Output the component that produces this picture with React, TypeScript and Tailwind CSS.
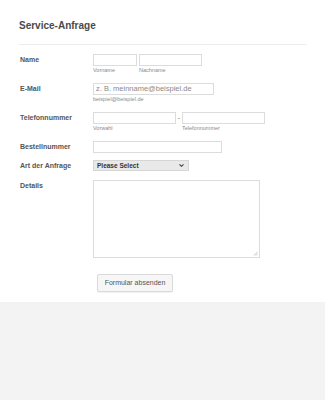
import { ChevronDown } from 'lucide-react';

const font = { fontFamily: '"Liberation Sans", Arial, sans-serif' };

function Row({ label, children, className = '' }: { label: string; children: React.ReactNode; className?: string }) {
  return (
    <div className={`flex items-start ${className}`}>
      <div className="w-[73px] shrink-0 text-[7px] leading-[12px] font-bold text-[#555]">{label}</div>
      <div className="flex-1">{children}</div>
    </div>
  );
}

function Sub({ children, className = '' }: { children: React.ReactNode; className?: string }) {
  return <div className={`mt-[1px] text-[5.5px] leading-[7px] text-[#8a8a8a] ${className}`}>{children}</div>;
}

const inputCls = 'block h-[12px] border border-[#dcdcdc] bg-white';

export default function App() {
  return (
    <div className="min-h-screen bg-[#f3f3f3]" style={font}>
      <div className="bg-white pl-[20px] pr-[19px] pt-[20px] pb-[10px]">
        <h1 className="text-[10px] leading-[12px] font-bold text-[#4a4a4a] -ml-px">Service-Anfrage</h1>
        <div className="mt-[12px] -ml-px border-b border-[#ececec]" />

        {/* Name */}
        <Row label="Name" className="mt-[9px]">
          <div className="flex gap-[2px]">
            <div>
              <div className={`${inputCls} w-[44px]`} />
              <Sub>Vorname</Sub>
            </div>
            <div>
              <div className={`${inputCls} w-[63px]`} />
              <Sub>Nachname</Sub>
            </div>
          </div>
        </Row>

        {/* E-Mail */}
        <Row label="E-Mail" className="mt-[9px]">
          <div className={`${inputCls} w-[121px] flex items-center pl-[2px] text-[7.5px] text-[#8a8a8a]`}>
            z. B. meinname@beispiel.de
          </div>
          <Sub>beispiel@beispiel.de</Sub>
        </Row>

        {/* Telefonnummer */}
        <Row label="Telefonnummer" className="mt-[9px]">
          <div className="flex items-start">
            <div>
              <div className={`${inputCls} w-[83px]`} />
              <Sub>Vorwahl</Sub>
            </div>
            <div className="w-[6px] text-center text-[7px] leading-[12px] text-[#777]">-</div>
            <div>
              <div className={`${inputCls} w-[83px]`} />
              <Sub>Telefonnummer</Sub>
            </div>
          </div>
        </Row>

        {/* Bestellnummer */}
        <Row label="Bestellnummer" className="mt-[9px]">
          <div className={`${inputCls} w-[129px]`} />
        </Row>

        {/* Art der Anfrage */}
        <Row label="Art der Anfrage" className="mt-[7px]">
          <div className="flex h-[11px] w-[96px] items-center justify-between border border-[#d6d6d6] bg-[#e9e9e9] pl-[3px] pr-[3px] text-[6.5px] font-bold text-[#333]">
            <span>Please Select</span>
            <ChevronDown className="h-[7px] w-[7px] text-[#444]" strokeWidth={3.5} />
          </div>
        </Row>

        {/* Details */}
        <Row label="Details" className="mt-[8px]">
          <div className="relative h-[78px] w-[167px] border border-[#dcdcdc] bg-white">
            <svg className="absolute bottom-[1px] right-[1px]" width="5" height="5" viewBox="0 0 5 5">
              <path d="M4.5 1 L1 4.5 M4.5 3 L3 4.5" stroke="#aaa" strokeWidth="0.7" />
            </svg>
          </div>
        </Row>

        <div className="mt-[16px] flex pl-[77px]">
          <button className="h-[18px] w-[76px] rounded-[2px] border border-[#dadada] bg-[#f6f6f6] text-[7px] text-[#555] shadow-[0_1px_1px_rgba(0,0,0,0.06)]">
            Formular absenden
          </button>
        </div>
      </div>
    </div>
  );
}
